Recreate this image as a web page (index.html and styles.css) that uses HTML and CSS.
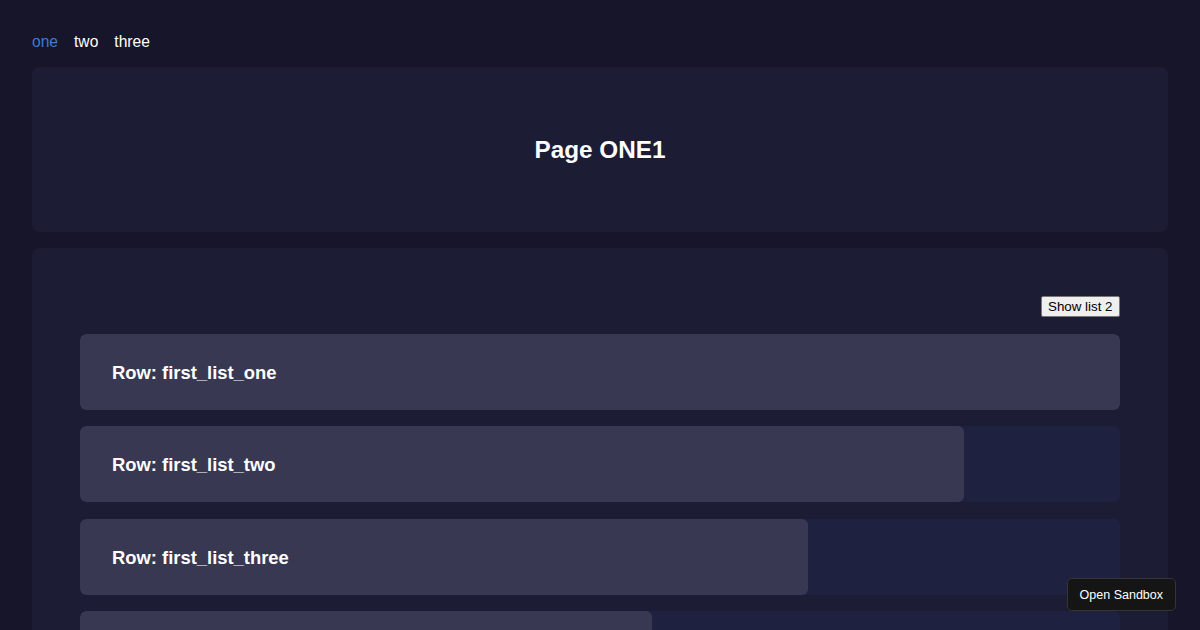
FILE: index.html
```html
<!DOCTYPE html>
<html>
<head>
<meta charset="utf-8">
<link rel="stylesheet" href="styles.css">
</head>
<body>
<div class="app">
  <nav class="nav">
    <a class="nav-link active">one</a>
    <a class="nav-link">two</a>
    <a class="nav-link">three</a>
  </nav>
  <section class="card header-card">
    <h2 class="title">Page ONE1</h2>
  </section>
  <section class="card list-card">
    <div class="toolbar"><button class="btn">Show list 2</button></div>
    <div class="rows">
      <div class="row"><div class="bar" style="width:100%"></div><span class="label">Row: first_list_one</span></div>
      <div class="row"><div class="bar" style="width:85%"></div><span class="label">Row: first_list_two</span></div>
      <div class="row"><div class="bar" style="width:70%"></div><span class="label">Row: first_list_three</span></div>
      <div class="row"><div class="bar" style="width:55%"></div><span class="label">Row: first_list_four</span></div>
    </div>
  </section>
</div>
<button class="sandbox">Open Sandbox</button>
</body>
</html>
```
FILE: styles.css
```css
html, body {
  margin: 0;
  padding: 0;
  background: #16152a;
  font-family: "Liberation Sans", Arial, sans-serif;
  color: #fff;
  height: 630px;
  overflow: hidden;
}
.app {
  padding: 32px 32px 0;
  display: flex;
  flex-direction: column;
  gap: 16px;
}
.nav {
  display: flex;
  gap: 16px;
  font-size: 15.6px;
  line-height: 19px;
}
.nav-link { color: #fff; }
.nav-link.active { color: #3d7bd4; }
.card {
  background: #1c1d34;
  border-radius: 8px;
}
.header-card {
  height: 165px;
  display: flex;
  align-items: center;
  justify-content: center;
}
.title {
  margin: 0;
  font-size: 24.3px;
  font-weight: bold;
  color: #fff;
}
.list-card {
  padding: 48px 48px 0;
  height: 400px;
}
.toolbar {
  display: flex;
  justify-content: flex-end;
  margin-bottom: 17px;
}
.btn {
  font-family: "Liberation Sans", Arial, sans-serif;
  font-size: 13.33px;
  height: 21px;
  padding: 0 6.5px;
  background: #efefef;
  color: #000;
  border: 1px solid #767676;
  border-radius: 2px;
}
.rows {
  display: flex;
  flex-direction: column;
  gap: 16.4px;
}
.row {
  position: relative;
  height: 76px;
  background: #1e2140;
  border-radius: 6px;
  display: flex;
  align-items: center;
  padding-left: 32px;
  overflow: hidden;
  flex-shrink: 0;
}
.bar {
  position: absolute;
  left: 0; top: 0; bottom: 0;
  background: #383852;
  border-radius: 6px;
}
.label {
  position: relative;
  top: 1px;
  font-size: 18.4px;
  font-weight: bold;
  color: #fff;
}
.sandbox {
  position: fixed;
  right: 24px;
  bottom: 19px;
  height: 33px;
  padding: 0 12px;
  background: #151515;
  color: #fff;
  border: 1px solid #353535;
  border-radius: 5px;
  font-family: "Liberation Sans", Arial, sans-serif;
  font-size: 12.5px;
}
```
